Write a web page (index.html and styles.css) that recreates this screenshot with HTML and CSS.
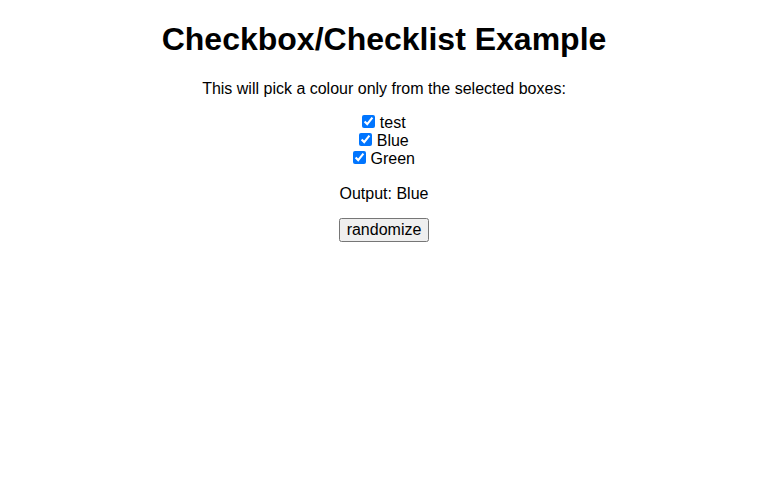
FILE: index.html
```html
<!DOCTYPE html>
<html>
<head>
<meta charset="utf-8">
<title>Checkbox/Checklist Example</title>
<link rel="stylesheet" href="styles.css">
</head>
<body>
<div class="app">
  <h1 class="title">Checkbox/Checklist Example</h1>
  <p class="intro">This will pick a colour only from the selected boxes:</p>
  <div class="checklist">
    <label class="item"><input class="box" type="checkbox" checked> test</label><br>
    <label class="item"><input class="box" type="checkbox" checked> Blue</label><br>
    <label class="item"><input class="box" type="checkbox" checked> Green</label>
  </div>
  <p class="output">Output: Blue</p>
  <button class="btn" type="button">randomize</button>
</div>
</body>
</html>
```

FILE: styles.css
```css
body {
  margin: 8px;
  font-family: "Liberation Sans", Arial, sans-serif;
  font-size: 16px;
  color: #000;
  background: #fff;
}
.app {
  text-align: center;
}
.title {
  font-size: 32px;
  font-weight: bold;
  margin: 13.44px 0 21.44px;
}
.intro {
  margin: 16px 0;
}
.output {
  margin: 17px 0 15px;
}
.checklist {
  margin: 16px 0;
}
.box {
  margin: 0;
}
.btn {
  font-family: inherit;
  font-size: 16px;
}
```
